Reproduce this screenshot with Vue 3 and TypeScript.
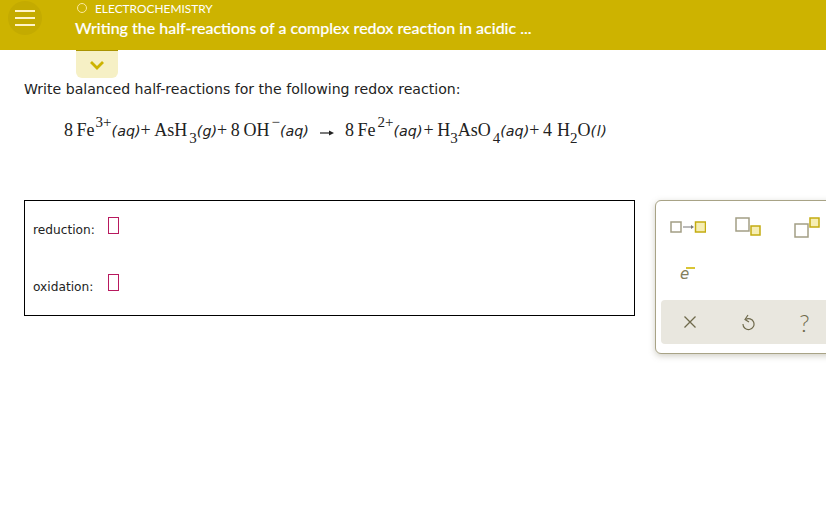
<template>
  <div class="page">
    <header class="top-bar">
      <button class="menu-btn" type="button" aria-label="Menu">
        <span></span><span></span><span></span>
      </button>
      <div class="titles">
        <div class="topic"><i class="topic-dot"></i>ELECTROCHEMISTRY</div>
        <div class="title">Writing the half-reactions of a complex redox reaction in acidic ...</div>
      </div>
    </header>
    <div class="tab">
      <svg width="16" height="10" viewBox="0 0 16 10"><path d="M2 2l6 6 6-6" fill="none" stroke="#cdb300" stroke-width="2.800" /></svg>
    </div>

    <p class="prompt">Write balanced half-reactions for the following redox reaction:</p>

    <div class="equation">
      <span>8&thinsp;Fe</span><sup class="up close">3+</sup><em>(aq)</em><span>+&thinsp;AsH</span><sub class="down">3</sub><em>(g)</em><span>+&thinsp;8&thinsp;OH</span><sup class="up">−</sup><em>(aq)</em>
      <svg class="arrow" width="14" height="6" viewBox="0 0 14 6"><path d="M0 3h10" stroke="#222" stroke-width="1.200" /><path d="M9 .5L14 3 9 5.500z" fill="#222" /></svg>
      <span>8&thinsp;Fe</span><sup class="up">2+</sup><em>(aq)</em><span class="op">+&thinsp;H</span><sub class="down tight">3</sub><span>AsO</span><sub class="down">4</sub><em>(aq)</em><span>+&thinsp;4</span><span class="water">H</span><sub class="down tight">2</sub><span>O</span><em class="liquid">(l)</em>
    </div>

    <div class="work">
      <div class="answers">
        <div v-for="row in rows" :key="row" class="answer-row">
          <span class="label">{{ row }}:</span>
          <span class="slot"></span>
        </div>
      </div>

      <aside class="palette">
        <div class="tools">
          <button class="tool" type="button">
            <svg class="shift" width="36" height="14" viewBox="0 0 36 14">
              <rect x="1" y="2" width="10" height="10" fill="#fff" stroke="#a39e85" stroke-width="1.500" />
              <path d="M13 7h9" stroke="#777" stroke-width="1" /><path d="M21 5l3 2-3 2z" fill="#777" />
              <rect x="25.500" y="2" width="10" height="10" fill="#f6eeb4" stroke="#c4ac10" stroke-width="1.500" />
            </svg>
          </button>
          <button class="tool" type="button">
            <svg width="26" height="20" viewBox="0 0 26 20">
              <rect x="1" y="1" width="13" height="13" fill="#fff" stroke="#a39e85" stroke-width="1.500" />
              <rect x="16" y="9" width="9" height="9" fill="#f6eeb4" stroke="#c4ac10" stroke-width="1.500" />
            </svg>
          </button>
          <button class="tool" type="button">
            <svg width="26" height="21" viewBox="0 0 26 21">
              <rect x="1" y="7" width="13" height="13" fill="#fff" stroke="#a39e85" stroke-width="1.500" />
              <rect x="16" y="1" width="9" height="9" fill="#f6eeb4" stroke="#c4ac10" stroke-width="1.500" />
            </svg>
          </button>
          <button class="tool electron" type="button"><em>e</em><i></i></button>
        </div>
        <div class="actions">
          <button class="action" type="button" aria-label="Clear">
            <svg width="14" height="14" viewBox="0 0 14 14"><path d="M1.500 1.500l11 11M12.500 1.500l-11 11" stroke="#6f6a4c" stroke-width="1.300" /></svg>
          </button>
          <button class="action" type="button" aria-label="Undo">
            <svg width="14" height="17" viewBox="0 0 14 17"><path d="M4.500 5.500A5.500 5.500 0 1 1 2 10" fill="none" stroke="#6f6a4c" stroke-width="1.200" /><path d="M7 1L4 5.500 8 8" fill="none" stroke="#6f6a4c" stroke-width="1.200" /></svg>
          </button>
          <button class="action help" type="button" aria-label="Help">?</button>
        </div>
      </aside>
    </div>
  </div>
</template>

<script setup lang="ts">
const rows: string[] = ['reduction', 'oxidation']
</script>

<style>
html,
body {
  margin: 0;
  overflow: hidden;
  background: #fff;
}
</style>

<style scoped>
.page {
  width: 826px;
  height: 524px;
  overflow: hidden;
  font-family: "DejaVu Sans", sans-serif;
  color: #222;
}

button {
  border: 0;
  padding: 0;
  background: none;
  font: inherit;
  color: inherit;
}

.top-bar {
  display: flex;
  height: 50px;
  background: #cdb300;
  color: #fff;
  font-family: Lato, sans-serif;
}

.menu-btn {
  display: flex;
  flex-direction: column;
  justify-content: center;
  align-items: center;
  gap: 5px;
  flex: none;
  width: 34px;
  height: 34px;
  margin: 1px 0 0 8px;
  border-radius: 50%;
  background: #c4ab00;
}

.menu-btn span {
  width: 20px;
  height: 2px;
  background: #fff4c8;
}

.titles {
  margin-left: 33px;
}

.topic {
  display: flex;
  align-items: center;
  height: 16px;
  font-size: 11.900px;
}

.topic-dot {
  width: 8px;
  height: 8px;
  margin: 0 8px 0 2px;
  border: 1.500px solid #fbe9a0;
  border-radius: 50%;
}

.title {
  margin-top: 2px;
  font-size: 16px;
  font-weight: 500;
  -webkit-text-stroke: 0.15px #fff;
  white-space: nowrap;
}

.tab {
  display: flex;
  justify-content: center;
  align-items: center;
  width: 42px;
  height: 28px;
  margin-left: 76px;
  border-top: 1px solid #a99300;
  border-radius: 0 0 6px 6px;
  background: #f6f0c5;
  box-sizing: border-box;
}

.prompt {
  margin: 2px 0 0 24px;
  font-size: 14.100px;
  line-height: 18px;
}

.equation {
  display: flex;
  align-items: baseline;
  height: 30px;
  margin: 22px 0 0 64px;
  font-family: "Liberation Serif", serif;
  font-size: 18px;
  white-space: pre;
}

.equation em {
  font-family: "DejaVu Sans", sans-serif;
  font-size: 14.300px;
}

.equation sup,
.equation sub {
  position: relative;
  font-size: 15px;
  line-height: 0;
  vertical-align: baseline;
}

.up {
  top: -9px;
  margin-left: 2px;
}

.close {
  margin-left: 1px;
}

.down {
  top: 7px;
  margin-left: 2px;
}

.tight {
  margin-left: 0;
}

.op {
  margin-left: 1px;
}

.water {
  margin-left: 5px;
}

.equation .liquid {
  letter-spacing: 0.6px;
}

.arrow {
  margin: 0 11px 0 11px;
}

.work {
  display: flex;
  align-items: flex-start;
  margin: 50px 0 0 24px;
}

.answers {
  flex: none;
  box-sizing: border-box;
  width: 611px;
  height: 116px;
  padding-top: 14px;
  border: 1px solid #000;
}

.answer-row {
  display: flex;
  align-items: center;
  height: 20px;
  margin: 0 0 37px 8px;
  font-size: 12.200px;
}

.label {
  width: 75px;
  margin-top: 10px;
}

.slot {
  box-sizing: border-box;
  width: 11px;
  height: 17px;
  border: 1px solid #b8195e;
}

.palette {
  flex: none;
  box-sizing: border-box;
  width: 200px;
  height: 154px;
  margin-left: 20px;
  padding: 5px;
  border: 1px solid #a8a386;
  border-radius: 6px;
  background: #fff;
  box-shadow: 0 2px 6px rgba(120, 115, 90, 0.35);
}

.tools {
  display: grid;
  grid-template-columns: 56px 62px 56px;
  grid-template-rows: 42px 52px;
}

.tool {
  display: flex;
  justify-content: center;
  align-items: center;
}

.shift {
  margin-left: -2px;
}

.electron {
  position: relative;
  padding-right: 9px;
  color: #837e5c;
  font-size: 15px;
}

.electron i {
  position: absolute;
  top: 19px;
  left: 25px;
  width: 9px;
  height: 2px;
  background: #d9c535;
}

.actions {
  display: grid;
  grid-template-columns: 58px 57px 57px;
  height: 44px;
  border-radius: 4px;
  background: #e9e7df;
}

.action {
  display: flex;
  justify-content: center;
  align-items: center;
}

.help {
  font-family: Lato, sans-serif;
  font-size: 24px;
  font-weight: 300;
  color: #6f6a4c;
}
</style>
